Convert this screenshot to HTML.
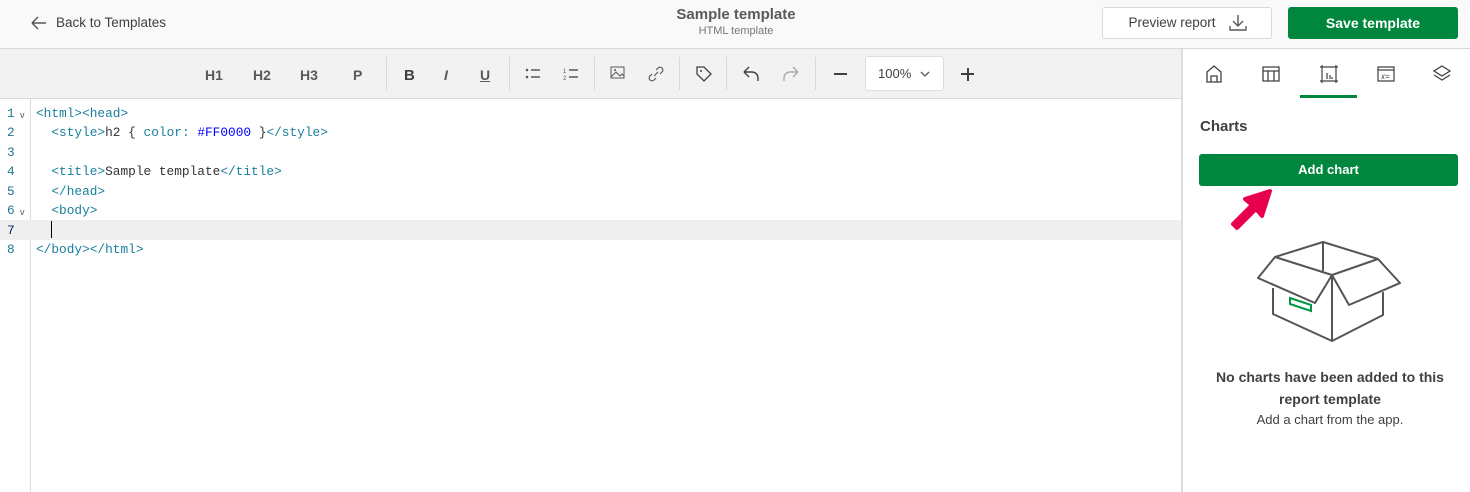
<!DOCTYPE html>
<html><head><style>
*{margin:0;padding:0;box-sizing:border-box}
body{width:1470px;height:492px;overflow:hidden;background:#fff;font-family:"Liberation Sans",sans-serif;color:#404040;position:relative}
.a{position:absolute}
.hdr{left:0;top:0;width:1470px;height:49px;background:#f9f9f9;border-bottom:1px solid #d9d9d9}
.tb{left:0;top:49px;width:1181px;height:50px;background:#f2f2f2;border-bottom:1px solid #d9d9d9}
.tbt{font-weight:bold;font-size:14px;color:#595959;top:67px}
.sep{top:57px;width:1px;height:33px;background:#d9d9d9}
.code{font-family:"Liberation Mono",monospace;font-size:12.8px;line-height:19.45px;color:#333}
.tg{color:#1a7f9c}
.btn{border-radius:3px;font-size:14px;font-weight:bold;text-align:center}
</style></head><body>
<div class="a hdr"></div>
<svg class="a" style="left:30px;top:15px" width="18" height="16"><path d="M2 8H16M2 8L8 2M2 8L8 14" stroke="#595959" stroke-width="1.5" fill="none"/></svg>
<div class="a" style="left:56px;top:15px;font-size:13.5px;color:#404040">Back to Templates</div>
<div class="a" style="left:636px;top:6px;width:200px;text-align:center;font-size:15px;font-weight:bold;color:#595959">Sample template</div>
<div class="a" style="left:636px;top:25px;width:200px;text-align:center;font-size:11px;color:#777">HTML template</div>
<div class="a btn" style="left:1102px;top:7px;width:170px;height:32px;border:1px solid #d9d9d9;background:#fff;font-weight:normal;color:#404040;line-height:30px;padding-right:30px;font-size:13.5px">Preview report</div>
<svg class="a" style="left:1228px;top:14px" width="20" height="18"><path d="M10 1V12M5 7L10 12L15 7M2 12V16H18V12" stroke="#595959" stroke-width="1.4" fill="none"/></svg>
<div class="a btn" style="left:1288px;top:7px;width:170px;height:32px;background:#00873d;color:#fff;line-height:32px">Save template</div>

<div class="a tb"></div>
<div class="a tbt" style="left:205px">H1</div>
<div class="a tbt" style="left:253px">H2</div>
<div class="a tbt" style="left:300px">H3</div>
<div class="a tbt" style="left:353px">P</div>
<div class="a sep" style="left:386px"></div>
<div class="a tbt" style="left:404px;font-size:15px;color:#404040">B</div>
<div class="a tbt" style="left:444px;font-style:italic">I</div>
<div class="a tbt" style="left:480px;text-decoration:underline">U</div>
<div class="a sep" style="left:509px"></div>
<svg class="a" style="left:524px;top:66px" width="20" height="16"><circle cx="3" cy="4" r="1.3" fill="#595959"/><circle cx="3" cy="11" r="1.3" fill="#595959"/><path d="M7 4H16M7 11H16" stroke="#595959" stroke-width="1.5"/></svg>
<svg class="a" style="left:562px;top:66px" width="20" height="16"><text x="1" y="7" font-size="6" fill="#595959">1</text><text x="1" y="14" font-size="6" fill="#595959">2</text><path d="M7 4H16M7 11H16" stroke="#595959" stroke-width="1.5"/></svg>
<div class="a sep" style="left:594px"></div>
<svg class="a" style="left:610px;top:66px" width="16" height="14"><rect x="1" y="1" width="13" height="11" stroke="#595959" fill="none"/><path d="M1 11L6 6L10 10L12 8L14 10" stroke="#595959" fill="none"/><circle cx="5" cy="4" r="1" fill="#595959"/></svg>
<svg class="a" style="left:648px;top:66px" width="16" height="16"><path d="M6 10L10 6M4 8L2 10a2.5 2.5 0 0 0 4 4L8 12M12 8L14 6a2.5 2.5 0 0 0-4-4L8 4" stroke="#595959" stroke-width="1.2" fill="none"/></svg>
<div class="a sep" style="left:679px"></div>
<svg class="a" style="left:695px;top:65px" width="18" height="18"><path d="M2 2H9L16 9L9 16L2 9Z" stroke="#404040" stroke-width="1.3" fill="none"/><circle cx="6" cy="6" r="1" fill="#404040"/></svg>
<div class="a sep" style="left:726px"></div>
<svg class="a" style="left:742px;top:65px" width="18" height="18"><path d="M2 7L7 2M2 7L7 12M2 7H10a6 6 0 0 1 6 6V16" stroke="#404040" stroke-width="1.4" fill="none"/></svg>
<svg class="a" style="left:782px;top:65px" width="18" height="18"><path d="M16 7L11 2M16 7L11 12M16 7H8a6 6 0 0 0-6 6V16" stroke="#aaa" stroke-width="1.4" fill="none"/></svg>
<div class="a sep" style="left:815px"></div>
<div class="a" style="left:834px;top:73px;width:13px;height:2px;background:#404040"></div>
<div class="a" style="left:865px;top:56px;width:79px;height:35px;background:#fff;border:1px solid #ddd;border-radius:3px;font-size:13px;line-height:33px;padding-left:12px;color:#404040">100%</div>
<svg class="a" style="left:920px;top:70px" width="10" height="8"><path d="M1 2L5 6L9 2" stroke="#595959" stroke-width="1.3" fill="none"/></svg>
<div class="a" style="left:961px;top:73px;width:13px;height:2px;background:#404040"></div>
<div class="a" style="left:966.5px;top:67.5px;width:2px;height:13px;background:#404040"></div>

<div class="a" style="left:30px;top:99px;width:1px;height:393px;background:#ddd"></div>
<div class="a" style="left:0;top:220px;width:1181px;height:20px;background:#efefef"></div>
<div class="a" style="left:51px;top:221px;width:1px;height:17px;background:#000"></div>
<div class="a code" style="left:7px;top:104px;color:#237893;width:20px">1<br>2<br>3<br>4<br>5<br>6<br><span style="color:#0b216f">7</span><br>8</div>
<div class="a" style="left:20px;top:110px;font-size:9px;color:#555">v</div>
<div class="a" style="left:20px;top:207px;font-size:9px;color:#555">v</div>
<div class="a code" style="left:36px;top:104px;white-space:pre"><span class="tg">&lt;html&gt;&lt;head&gt;</span>
  <span class="tg">&lt;style&gt;</span>h2 <span style="color:#333">{</span> <span class="tg">color:</span> <span style="color:#00f">#FF0000</span> }<span class="tg">&lt;/style&gt;</span>

  <span class="tg">&lt;title&gt;</span>Sample template<span class="tg">&lt;/title&gt;</span>
  <span class="tg">&lt;/head&gt;</span>
  <span class="tg">&lt;body&gt;</span>

<span class="tg">&lt;/body&gt;&lt;/html&gt;</span></div>

<div class="a" style="left:1181px;top:49px;width:2px;height:443px;background:#ddd"></div>
<svg class="a" style="left:1205px;top:64px" width="18" height="20"><path d="M2 8L9 2L16 8V18H2Z M6 18V12H12V18" stroke="#404040" stroke-width="1.3" fill="none"/></svg>
<svg class="a" style="left:1262px;top:66px" width="18" height="16"><path d="M1 1H17V15H1Z M1 5H17 M6 5V15 M12 5V15" stroke="#404040" stroke-width="1.3" fill="none"/></svg>
<svg class="a" style="left:1320px;top:64px" width="18" height="20"><path d="M2 1V19M16 1V19M0 3H18M0 17H18M7 15V9M10 15V11M12 15V13" stroke="#404040" stroke-width="1.2" fill="none"/></svg>
<div class="a" style="left:1300px;top:95px;width:57px;height:3px;background:#00873d"></div>
<svg class="a" style="left:1377px;top:66px" width="18" height="16"><path d="M1 1H17V15H1Z M1 4H17" stroke="#404040" stroke-width="1.2" fill="none"/><text x="4" y="13" font-size="8" font-style="italic" fill="#404040">x=</text></svg>
<svg class="a" style="left:1433px;top:64px" width="18" height="20"><path d="M9 2L17 7L9 12L1 7Z M1 11L9 16L17 11" stroke="#404040" stroke-width="1.3" fill="none"/></svg>
<div class="a" style="left:1200px;top:118px;font-size:15px;font-weight:bold;color:#404040">Charts</div>
<div class="a btn" style="left:1199px;top:154px;width:259px;height:32px;background:#00873d;color:#fff;line-height:32px;font-size:13px">Add chart</div>
<svg class="a" style="left:1225px;top:185px" width="50" height="50"><path d="M45 6L20 14L27 20L8 39L12 43L31 24L37 31Z" fill="#e8004f" stroke="#e8004f" stroke-width="4" stroke-linejoin="round"/></svg>
<svg class="a" style="left:1250px;top:235px" width="160" height="115"><g stroke="#555" stroke-width="2" fill="none" stroke-linejoin="round"><path d="M73 7L25 22L82 40L128 24Z"/><path d="M73 7V36"/><path d="M25 22L8 43L65 68L82 40"/><path d="M82 40L99 70L150 48L128 24"/><path d="M23 53V79L82 106L133 80V57"/><path d="M82 40V106"/></g><path d="M40 63L61 70L61 76L40 69Z" stroke="#009845" stroke-width="2" fill="none"/></svg>
<div class="a" style="left:1190px;top:366px;width:280px;text-align:center;font-size:14px;font-weight:bold;line-height:22px;color:#404040">No charts have been added to this<br>report template</div>
<div class="a" style="left:1190px;top:412px;width:280px;text-align:center;font-size:13px;color:#404040">Add a chart from the app.</div>
</body></html>
